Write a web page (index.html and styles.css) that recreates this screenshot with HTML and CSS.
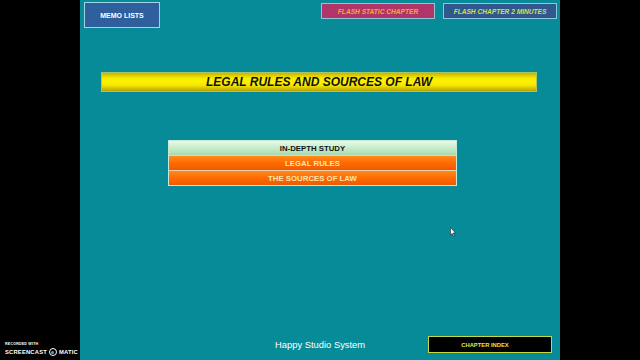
FILE: index.html
```html
<!DOCTYPE html>
<html>
    <head>
        <meta charset="utf-8">
        <title>Legal rules and sources of law</title>
        <link rel="stylesheet" href="styles.css">
    </head>
    <body>
        <div class="side">
            <div class="recorded">
                <div class="rec-small">RECORDED WITH</div>
                <div class="rec-brand">SCREENCAST <span class="rec-dot"><span></span></span> MATIC</div>
            </div>
        </div>

        <div class="stage">
            <div class="topbar">
                <div class="btn memo">MEMO LISTS</div>
                <div class="flash">
                    <div class="btn flash-static">FLASH STATIC CHAPTER</div>
                    <div class="btn flash-two">FLASH CHAPTER 2 MINUTES</div>
                </div>
            </div>

            <div class="title">LEGAL RULES AND SOURCES OF LAW</div>

            <div class="menu">
                <div class="item study">IN-DEPTH STUDY</div>
                <div class="item orange">LEGAL RULES</div>
                <div class="item orange">THE SOURCES OF LAW</div>
            </div>

            <div class="cursor">
                <svg width="6" height="10" viewBox="0 0 6 10">
                    <path d="M0.5 0.5 L0.5 8 L2.2 6.4 L3.4 9.3 L4.4 8.9 L3.2 6 L5.5 6 Z" fill="#fff" stroke="#222" stroke-width="0.6"/>
                </svg>
            </div>

            <div class="footer">
                <div class="studio">Happy Studio System</div>
                <div class="btn index">CHAPTER INDEX</div>
            </div>
        </div>

        <div class="side"></div>
    </body>
</html>
```

FILE: styles.css
```css
html, body {
    margin: 0;
    height: 100%;
}
body {
    background: #000;
    display: flex;
    font-family: "Liberation Sans", Arial, sans-serif;
    overflow: hidden;
}
.side {
    width: 80px;
    display: flex;
    flex-direction: column;
    justify-content: flex-end;
}
.stage {
    width: 480px;
    height: 360px;
    background: #078b98;
    display: flex;
    flex-direction: column;
    position: relative;
}

/* buttons */
.btn {
    box-sizing: border-box;
    display: flex;
    align-items: center;
    justify-content: center;
    font-weight: bold;
    white-space: nowrap;
}
.topbar {
    display: flex;
    justify-content: space-between;
    align-items: flex-start;
    height: 30px;
}
.memo {
    margin: 2px 0 0 4px;
    width: 76px;
    height: 26px;
    background: #2f5f9c;
    border: 1px solid #9fd4e4;
    color: #fff;
    font-size: 7px;
}
.flash {
    display: flex;
    gap: 8px;
    margin: 3px 3px 0 0;
}
.flash .btn {
    width: 114px;
    height: 16px;
    border: 1px solid #8fc6dc;
    font-style: italic;
    font-size: 6.6px;
}
.flash-static {
    background: #b0366a;
    color: #f4aa36;
}
.flash-two {
    background: #30588f;
    color: #d4e048;
}

/* title */
.title {
    margin: 42px 0 0 21px;
    width: 436px;
    height: 20px;
    box-sizing: border-box;
    border: 1px solid #a8c468;
    background: linear-gradient(#c8b400, #f8ec00 30%, #fff200 50%, #f4e400 70%, #b8a200);
    color: #111;
    font-weight: bold;
    font-style: italic;
    font-size: 12px;
    display: flex;
    align-items: center;
    justify-content: center;
}

/* menu */
.menu {
    margin: 48px 0 0 88px;
    width: 289px;
    border: 1px solid #c8e8d8;
    box-sizing: border-box;
}
.item {
    height: 14px;
    display: flex;
    align-items: center;
    justify-content: center;
    font-weight: bold;
    font-size: 7.8px;
}
.study {
    background: linear-gradient(#e8fae8, #c0eac4 60%, #a8d8b0);
    color: #111;
}
.orange {
    background: linear-gradient(#ff8a1c, #ff6a00 50%, #f05a00);
    color: #ffe4b0;
    border-top: 1px solid #f0d0b0;
}

.cursor {
    position: absolute;
    left: 370px;
    top: 227px;
    line-height: 0;
}

/* footer */
.footer {
    margin-top: auto;
    margin-bottom: 7px;
    display: flex;
    align-items: center;
    height: 17px;
}
.studio {
    margin-left: 195px;
    color: #fff;
    font-size: 9.4px;
}
.index {
    margin-left: auto;
    margin-right: 8px;
    padding-right: 10px;
    width: 124px;
    height: 17px;
    background: #000;
    border: 1px solid #c8d840;
    color: #ece43c;
    font-size: 5.8px;
}

/* recorder watermark */
.recorded {
    margin: 0 0 4px 5px;
    color: #fff;
}
.rec-small {
    font-size: 3.6px;
    font-weight: bold;
    letter-spacing: 0.2px;
    margin-bottom: 2px;
}
.rec-brand {
    display: flex;
    align-items: center;
    gap: 2px;
    font-size: 5.8px;
    font-weight: bold;
    letter-spacing: 0.2px;
}
.rec-dot {
    width: 8px;
    height: 8px;
    border: 1px solid #fff;
    border-radius: 50%;
    box-sizing: border-box;
    display: flex;
    align-items: center;
    justify-content: center;
}
.rec-dot span {
    width: 3px;
    height: 3px;
    border-radius: 50%;
    background: #4aa8d8;
}
```
